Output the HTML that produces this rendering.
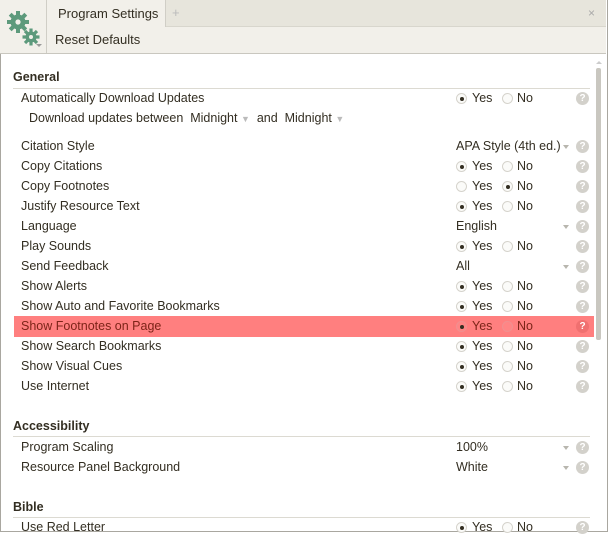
<!DOCTYPE html>
<html><head><style>
body{margin:0;width:608px;height:533px;overflow:hidden;background:#fff;font-family:"Liberation Sans",sans-serif;font-size:12.5px;color:#332e22;position:relative}
.a{position:absolute;white-space:nowrap}
.lbl{left:21px}
.sec{left:13px;font-weight:bold}
.line{position:absolute;left:13px;width:577px;height:1px;background:#dcdad2}
.r{position:absolute;width:11px;height:11px;border-radius:50%;border:1px solid #d5d3cc;background:#fbfbf9;box-sizing:border-box}
.r.on::after{content:"";position:absolute;left:2.5px;top:2.5px;width:4px;height:4px;border-radius:50%;background:#332e22}
.h{position:absolute;left:576px;width:13px;height:13px;border-radius:50%;background:#d3d1cb;color:#fff;font-size:10px;font-weight:bold;text-align:center;line-height:13px}
.dd{position:absolute;width:0;height:0;border-left:3px solid transparent;border-right:3px solid transparent;border-top:4px solid #b8b6ae}
</style></head><body>
<div style="position:absolute;left:0;top:0;width:606px;height:531px;border:1px solid #a9a7a0;border-top:none"></div>
<div style="position:absolute;left:0;top:0;width:606px;height:26px;background:#e7e5dc;border-bottom:1px solid #d8d6cd"></div>
<div style="position:absolute;left:0;top:27px;width:606px;height:26px;background:#f2f0ea;border-bottom:1px solid #c9c7bf"></div>
<div style="position:absolute;left:0;top:0;width:46px;height:53px;background:#f2f0ea;border-right:1px solid #d0cec6"></div>
<div style="position:absolute;left:47px;top:0;width:118px;height:27px;background:#f2f0ea;border-right:1px solid #d0cec6"></div>
<div class="a" style="left:58px;top:6px;font-size:13px">Program Settings</div>
<div class="a" style="left:172px;top:5px;color:#bbb;font-size:13px">+</div>
<div class="a" style="left:588px;top:6px;color:#aaa;font-size:12px">×</div>
<div class="a" style="left:55px;top:32px;font-size:13px">Reset Defaults</div>
<svg class="a" style="left:4px;top:8px" width="40" height="44" viewBox="0 0 40 44">
<g fill="#5d9a7c"><circle cx="14" cy="14" r="7.5"/><g stroke="#5d9a7c" stroke-width="4"><path d="M14 3v22M3 14h22M6.2 6.2l15.6 15.6M21.8 6.2L6.2 21.8"/></g>
<circle cx="27" cy="29" r="5.5"/><g stroke="#5d9a7c" stroke-width="3.2"><path d="M27 20.5v17M18.5 29h17M21 23l12 12M33 23L21 35"/></g></g>
<circle cx="14" cy="14" r="2.6" fill="#f2f0ea"/><circle cx="27" cy="29" r="2" fill="#f2f0ea"/>
<path d="M32 36h6l-3 3z" fill="#999"/></svg>
<div style="position:absolute;left:596px;top:68px;width:5px;height:272px;background:#c9c7c0;border-radius:2px"></div>
<div style="position:absolute;left:596px;top:61px;border-left:3px solid transparent;border-right:3px solid transparent;border-bottom:3px solid #ccc"></div>
<div style="position:absolute;left:14px;top:316px;width:580px;height:21px;background:#ff7f7f"></div>
<div class="a sec" style="top:70px">General</div><div class="line" style="top:88px"></div>
<div class="a sec" style="top:419px">Accessibility</div><div class="line" style="top:436px"></div>
<div class="a sec" style="top:500px">Bible</div><div class="line" style="top:517px"></div>
<div class="a" style="left:29px;top:111px">Download updates between&nbsp; Midnight <span style="color:#bbb;font-size:9px">▼</span>&nbsp; and&nbsp; Midnight <span style="color:#bbb;font-size:9px">▼</span></div>
<script>
var rows=[["Automatically Download Updates",91,"y"],["Citation Style",139,"d","APA Style (4th ed.)"],["Copy Citations",159,"y"],["Copy Footnotes",179,"n"],["Justify Resource Text",199,"y"],["Language",219,"d","English"],["Play Sounds",239,"y"],["Send Feedback",259,"d","All"],["Show Alerts",279,"y"],["Show Auto and Favorite Bookmarks",299,"y"],["Show Footnotes on Page",319,"y",null,1],["Show Search Bookmarks",339,"y"],["Show Visual Cues",359,"y"],["Use Internet",379,"y"],["Program Scaling",440,"d","100%"],["Resource Panel Background",460,"d","White"],["Use Red Letter",520,"y"]];
var h="";rows.forEach(function(r){var t=r[1],c=r[4]?"#7d2418":"#332e22";
h+='<div class="a lbl" style="top:'+t+'px;color:'+c+'">'+r[0]+'</div>';
if(r[2]=="d"){h+='<div class="a" style="left:456px;top:'+t+'px">'+r[3]+'</div><div class="dd" style="left:563px;top:'+(t+6)+'px"></div>';}
else{
h+='<div class="r'+(r[2]=="y"?" on":"")+'" '+(r[4]?'style="left:456px;top:'+(t+2)+'px;border-color:#f09090;background:#ff8585"':'style="left:456px;top:'+(t+2)+'px"')+'></div><div class="a" style="left:472px;top:'+t+'px;color:'+c+'">Yes</div>';
h+='<div class="r'+(r[2]=="n"?" on":"")+'" '+(r[4]?'style="left:502px;top:'+(t+2)+'px;border-color:#f09090;background:#ff8585"':'style="left:502px;top:'+(t+2)+'px"')+'></div><div class="a" style="left:517px;top:'+t+'px;color:'+c+'">No</div>';}
h+='<div class="h" style="top:'+(t+1)+'px;'+(r[4]?'background:#f07070':'')+'">?</div>';});
document.write(h);
</script>
</body></html>
